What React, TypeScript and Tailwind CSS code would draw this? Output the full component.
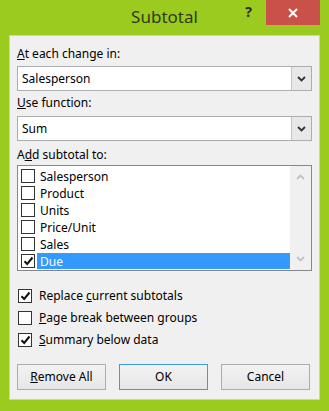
import { ReactNode } from 'react';

function Check({ checked, className = '' }: { checked?: boolean; className?: string }) {
  return (
    <div className={`w-[14px] h-[14px] border border-[#333] bg-white flex items-center justify-center shrink-0 ${className}`}>
      {checked && (
        <svg width="11" height="10" viewBox="0 0 11 10">
          <path d="M1.5 5.2 L4.2 8 L9.5 1.5" fill="none" stroke="#111" strokeWidth="2" />
        </svg>
      )}
    </div>
  );
}

function Chevron({ up, color = '#333' }: { up?: boolean; color?: string }) {
  return (
    <svg width="9" height="6" viewBox="0 0 9 6" className={up ? 'rotate-180' : ''}>
      <path d="M1 1 L4.5 4.5 L8 1" fill="none" stroke={color} strokeWidth="1.8" />
    </svg>
  );
}

function Select({ value }: { value: string }) {
  return (
    <div className="h-[25px] flex border border-[#abadb3] bg-white">
      <div className="flex-1 pl-[4px] flex items-center text-[12px] text-black">{value}</div>
      <div className="w-[20px] bg-[#e8e8e8] border-l border-[#c5c5c5] flex items-center justify-center">
        <Chevron />
      </div>
    </div>
  );
}

function Label({ children }: { children: ReactNode }) {
  return <div className="h-[16px] leading-[16px] text-[12px] text-black">{children}</div>;
}

const fields = ['Salesperson', 'Product', 'Units', 'Price/Unit', 'Sales', 'Due'];

export default function App() {
  return (
    <div className="w-[329px] h-[411px] bg-[#9acb1e] flex flex-col" style={{ fontFamily: '"Noto Sans", "Open Sans", sans-serif' }}>
      {/* Title bar */}
      <div className="h-[35px] grid grid-cols-[1fr_auto_1fr]">
        <div />
        <div className="pt-[5px] text-[17px] text-[#2e3a14] leading-[24px]">Subtotal</div>
        <div className="flex justify-end items-start pr-[9px]">
          <div className="mt-[3px] mr-[14px] text-[14px] font-bold text-[#2a2a2a] leading-[18px]">?</div>
          <div className="w-[54px] h-[25px] bg-[#c9514a] flex items-center justify-center">
            <svg width="10" height="10" viewBox="0 0 10 10">
              <path d="M1 1 L9 9 M9 1 L1 9" stroke="white" strokeWidth="2" />
            </svg>
          </div>
        </div>
      </div>

      {/* Body */}
      <div className="mx-[9px] h-[365px] bg-[#f0f0f0] border border-[#c8d9a0] px-[7px] pt-[10px] flex flex-col">
        <Label><span className="underline">A</span>t each change in:</Label>
        <div className="mt-[4px]"><Select value="Salesperson" /></div>
        <div className="mt-[4px]"><Label><span className="underline">U</span>se function:</Label></div>
        <div className="mt-[5px]"><Select value="Sum" /></div>
        <div className="mt-[6px]"><Label>A<span className="underline">d</span>d subtotal to:</Label></div>

        <div className="mt-[2px] h-[106px] border border-[#828790] bg-white flex">
          <div className="flex-1 pl-[3px] pt-[1px] flex flex-col">
            {fields.map((f) => (
              <div key={f} className="h-[17px] flex items-center">
                <Check checked={f === 'Due'} />
                <div
                  className={`ml-[2px] flex-1 h-[16px] leading-[15px] pl-[2px] text-[12px] ${
                    f === 'Due' ? 'bg-[#3399ff] text-white border border-dotted border-[#c08040]' : 'text-black border border-transparent'
                  }`}
                >
                  {f}
                </div>
              </div>
            ))}
          </div>
          <div className="w-[21px] bg-[#f0f0f0] flex flex-col items-center justify-between py-[8px]">
            <Chevron up color="#c2c2c2" />
            <Chevron color="#c2c2c2" />
          </div>
        </div>

        <div className="mt-[14px] flex flex-col text-[12px] text-black">
          <div className="h-[22px] flex items-center gap-[7px]">
            <Check checked className="ml-[1px]" />
            <span>Replace <span className="underline">c</span>urrent subtotals</span>
          </div>
          <div className="h-[22px] flex items-center gap-[7px]">
            <Check className="ml-[1px]" />
            <span><span className="underline">P</span>age break between groups</span>
          </div>
          <div className="h-[22px] flex items-center gap-[7px]">
            <Check checked className="ml-[1px]" />
            <span><span className="underline">S</span>ummary below data</span>
          </div>
        </div>

        <div className="mt-[13px] flex justify-between text-[12px] text-black pr-[2px]">
          <button className="w-[89px] h-[26px] border border-[#adadad] bg-gradient-to-b from-[#f2f2f2] to-[#e6e6e6]">
            <span className="underline">R</span>emove All
          </button>
          <button className="w-[89px] h-[26px] border border-[#3c9ae6] bg-gradient-to-b from-[#f2f2f2] to-[#e6e6e6]">OK</button>
          <button className="w-[89px] h-[26px] border border-[#adadad] bg-gradient-to-b from-[#f2f2f2] to-[#e6e6e6]">Cancel</button>
        </div>
      </div>
    </div>
  );
}
